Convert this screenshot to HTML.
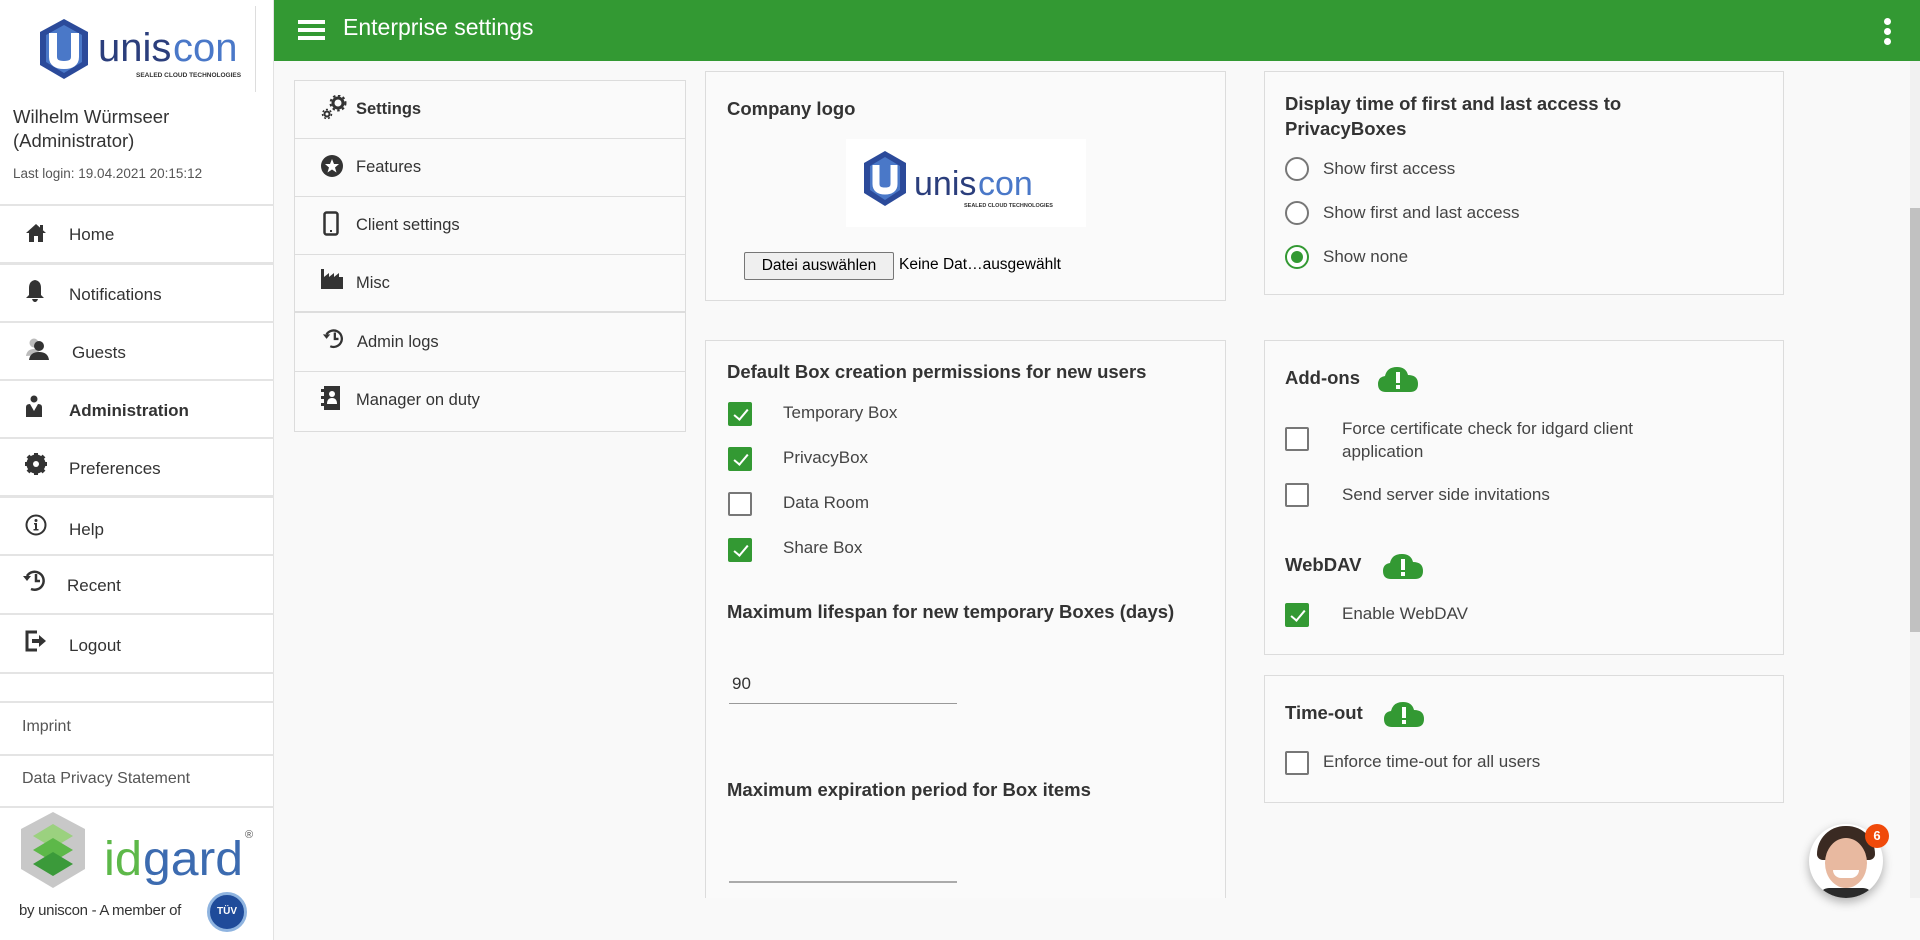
<!DOCTYPE html>
<html><head><meta charset="utf-8"><style>
*{box-sizing:border-box;margin:0;padding:0}
body{width:1920px;height:940px;overflow:hidden;background:#f9f9f9;font-family:"Liberation Sans",sans-serif;color:#333;position:relative}
.a{position:absolute}
#side{left:0;top:0;width:274px;height:940px;background:#fff;border-right:1px solid #e2e2e2}
.hl{position:absolute;left:0;width:274px;height:2px;background:#e4e4e4}
.nav{position:absolute;left:0;width:274px;font-size:17px;color:#333}
.nav svg{position:absolute;left:25px}
.nav span{position:absolute;left:69px}
#hdr{left:274px;top:0;width:1646px;height:61px;background:#339933}
.card{position:absolute;background:#fafafa;border:1px solid #dcdcdc}
.t{position:absolute;font-weight:bold;font-size:18.5px;color:#333}
.lbl{position:absolute;font-size:17px;color:#444}
.cb{position:absolute;width:24px;height:24px;border:2px solid #777;border-radius:2px;background:#fff}
.cb.on{background:#339933;border-color:#339933}
.cb.on:after{content:"";position:absolute;left:7px;top:2px;width:6px;height:12px;border:solid #fff;border-width:0 2px 2px 0;transform:rotate(40deg)}
.rd{position:absolute;width:24px;height:24px;border:2px solid #777;border-radius:50%;background:#fff}
.sub{position:absolute;left:0;width:390px;height:58px;border-bottom:1px solid #ddd;font-size:16.5px;color:#333}
.sub svg{position:absolute;left:26px;top:18px}
.sub span{position:absolute;left:61px;top:19px}
</style></head><body>
<div id="side" class="a">
  <svg class="a" style="left:36px;top:17px" width="205" height="64" viewBox="0 0 205 64">
    <polygon points="28,2 52,15 52,48 28,62 4,48 4,15" fill="#2b4a9a"/>
    <polygon points="28,8 46,18 46,45 28,56 10,45 10,18" fill="#4a78c8"/>
    <path d="M17 16 V40 Q17 48 28 48 Q39 48 39 40 V16" fill="none" stroke="#fff" stroke-width="8"/>
    <text x="62" y="44" font-family="Liberation Sans" font-size="40" fill="#2b3e7c">unis</text>
    <text x="137" y="44" font-family="Liberation Sans" font-size="40" fill="#4a78c8">con</text>
    <text x="100" y="60" font-family="Liberation Sans" font-size="6.5" font-weight="bold" fill="#333">SEALED CLOUD TECHNOLOGIES</text>
  </svg>
  <div class="a" style="left:255px;top:6px;width:1px;height:86px;background:#ddd"></div>
  <div class="a" style="left:13px;top:105px;font-size:18.5px;line-height:24px;color:#333">Wilhelm Würmseer<br>(Administrator)</div>
  <div class="a" style="left:13px;top:166px;font-size:13.5px;color:#555">Last login: 19.04.2021 20:15:12</div>
  <div class="hl" style="top:204px"></div><div class="hl" style="top:262px;height:3px"></div><div class="hl" style="top:321px"></div><div class="hl" style="top:379px"></div><div class="hl" style="top:437px"></div><div class="hl" style="top:495px;height:3px"></div><div class="hl" style="top:554px"></div><div class="hl" style="top:613px"></div><div class="hl" style="top:672px"></div><div class="hl" style="top:701px"></div><div class="hl" style="top:754px"></div><div class="hl" style="top:806px"></div>
  <div class="nav" style="top:206px;height:56px"><svg style="top:17px" width="22" height="20" viewBox="0 0 22 20"><path d="M11 1 L1 10 H4 V19 H9 V13 H13 V19 H18 V10 H21 Z" fill="#333"/><rect x="15" y="2" width="3" height="5" fill="#333"/></svg><span style="top:19px">Home</span></div>
  <div class="nav" style="top:265px;height:56px"><svg style="top:14px" width="20" height="24" viewBox="0 0 20 24"><path d="M10 1 Q4 2 4 9 V16 L1 19 H19 L16 16 V9 Q16 2 10 1Z M7 20 H13 Q12 23 10 23 Q8 23 7 20Z" fill="#333"/></svg><span style="top:20px">Notifications</span></div>
  <div class="nav" style="top:323px;height:56px"><svg style="top:14px" width="26" height="24" viewBox="0 0 26 24"><circle cx="9" cy="6" r="4.5" fill="#bbb"/><path d="M1 19 Q2 12 9 12 Q14 12 15 18Z" fill="#bbb"/><circle cx="14" cy="9" r="5" fill="#333"/><path d="M4 23 Q5 15 14 15 Q23 15 24 23Z" fill="#333"/></svg><span style="top:20px;left:72px">Guests</span></div>
  <div class="nav" style="top:381px;height:56px;font-weight:bold"><svg style="top:14px" width="18" height="24" viewBox="0 0 18 24"><circle cx="9" cy="4" r="3.5" fill="#333"/><path d="M1 22 V12 Q1 9 5 9 L9 16 L13 9 Q17 9 17 12 V22Z" fill="#333"/></svg><span style="top:20px">Administration</span></div>
  <div class="nav" style="top:439px;height:56px"><svg style="top:14px" width="22" height="22" viewBox="0 0 22 22"><circle cx="11" cy="11" r="7" fill="none" stroke="#333" stroke-width="5"/><g stroke="#333" stroke-width="4"><line x1="11" y1="0" x2="11" y2="22"/><line x1="0" y1="11" x2="22" y2="11"/><line x1="3" y1="3" x2="19" y2="19"/><line x1="19" y1="3" x2="3" y2="19"/></g><circle cx="11" cy="11" r="3" fill="#fff"/></svg><span style="top:20px">Preferences</span></div>
  <div class="nav" style="top:498px;height:56px"><svg style="top:16px" width="22" height="22" viewBox="0 0 22 22"><circle cx="11" cy="11" r="9.5" fill="none" stroke="#333" stroke-width="2"/><circle cx="11" cy="6.5" r="1.5" fill="#333"/><path d="M9 9 H12 V15 H13.5 V16.5 H8.5 V15 H10 V10.5 H9Z" fill="#333"/></svg><span style="top:22px">Help</span></div>
  <div class="nav" style="top:556px;height:57px"><svg style="top:12px;left:22px" width="24" height="24" viewBox="0 0 24 24"><path d="M5 8 A9 9 0 1 1 9 21" fill="none" stroke="#333" stroke-width="2.5"/><path d="M1 8 H9 L5 13Z" fill="#333"/><path d="M14 6 V13 H18" fill="none" stroke="#333" stroke-width="2.5"/></svg><span style="top:20px;left:67px">Recent</span></div>
  <div class="nav" style="top:615px;height:57px"><svg style="top:14px" width="22" height="24" viewBox="0 0 22 24"><path d="M12 3 H2 V21 H12" fill="none" stroke="#333" stroke-width="3"/><path d="M7 10 H14 V6 L21 12 L14 18 V14 H7Z" fill="#333"/></svg><span style="top:21px">Logout</span></div>
  <div class="a" style="left:22px;top:718px;font-size:16px;color:#555">Imprint</div>
  <div class="a" style="left:22px;top:770px;font-size:16px;color:#555">Data Privacy Statement</div>
  <svg class="a" style="left:18px;top:812px" width="245" height="80" viewBox="0 0 245 80">
    <polygon points="35,0 67,17 67,57 35,76 3,57 3,17" fill="#c8c8c8"/>
    <polygon points="35,12 55,24 35,36 15,24" fill="#9bd17f"/>
    <polygon points="35,26 55,38 35,50 15,38" fill="#5db849"/>
    <polygon points="35,40 55,52 35,64 15,52" fill="#3b9a3a"/>
    <text x="86" y="63" font-family="Liberation Sans" font-size="48" fill="#5db849" textLength="38" lengthAdjust="spacingAndGlyphs">id</text>
    <text x="125" y="63" font-family="Liberation Sans" font-size="48" fill="#3c6bb0" textLength="100" lengthAdjust="spacingAndGlyphs">gard</text>
    <text x="227" y="26" font-family="Liberation Sans" font-size="11" fill="#555">®</text>
  </svg>
  <div class="a" style="left:19px;top:902px;font-size:15px;color:#333;letter-spacing:-0.3px">by uniscon  -  A member of</div>
  <div class="a" style="left:207px;top:892px;width:40px;height:40px;border-radius:50%;background:#1f4b9a;border:3px solid #8fb4e0;color:#fff;font-size:10px;text-align:center;line-height:34px;font-weight:bold">TÜV</div>
</div>

<div id="hdr" class="a">
  <div class="a" style="left:24px;top:20px;width:27px;height:4px;background:#fff;box-shadow:0 8px 0 #fff,0 16px 0 #fff"></div>
  <div class="a" style="left:69px;top:14px;font-size:23px;color:#fff">Enterprise settings</div>
  <div class="a" style="left:1610px;top:18px;width:7px;height:7px;border-radius:50%;background:#fff;box-shadow:0 10px 0 #fff,0 20px 0 #fff"></div>
</div>

<div class="a" style="left:1910px;top:61px;width:10px;height:837px;background:#f1f1f1"></div>
<div class="a" style="left:1910px;top:208px;width:10px;height:424px;background:#c1c1c1"></div>

<div class="a" style="left:294px;top:80px;width:392px;height:352px;background:#fafafa;border:1px solid #dcdcdc">
  <div class="sub" style="top:0;font-weight:bold"><svg width="26" height="26" viewBox="0 0 26 26" style="top:14px"><circle cx="17" cy="8" r="5" fill="none" stroke="#333" stroke-width="3"/><circle cx="17" cy="8" r="7.5" fill="none" stroke="#333" stroke-width="2" stroke-dasharray="2.5 2.5"/><circle cx="6" cy="19" r="2.5" fill="none" stroke="#333" stroke-width="2"/><circle cx="6" cy="19" r="4.5" fill="none" stroke="#333" stroke-width="1.5" stroke-dasharray="2 2"/></svg><span>Settings</span></div>
  <div class="sub" style="top:58px"><svg width="22" height="22" viewBox="0 0 22 22" style="top:16px"><circle cx="11" cy="11" r="11" fill="#333"/><polygon points="11,4 13,9 18,9 14,12.5 15.5,17.5 11,14.5 6.5,17.5 8,12.5 4,9 9,9" fill="#fff"/></svg><span>Features</span></div>
  <div class="sub" style="top:116px"><svg width="16" height="26" viewBox="0 0 16 26" style="top:14px;left:28px"><rect x="1.5" y="1.5" width="13" height="22" rx="2" fill="none" stroke="#333" stroke-width="2.5"/><rect x="7" y="19" width="2" height="2" fill="#333"/></svg><span>Client settings</span></div>
  <div class="sub" style="top:174px;border-bottom:2px solid #ddd"><svg width="22" height="20" viewBox="0 0 22 20" style="top:14px"><path d="M0 20 V0 H3 V8 L8 4 V8 L13 4 V8 L18 4 V8 H22 V20Z" fill="#333"/></svg><span>Misc</span></div>
  <div class="sub" style="top:233px"><svg width="24" height="22" viewBox="0 0 24 24" style="top:13px"><path d="M5 8 A9 9 0 1 1 9 21" fill="none" stroke="#333" stroke-width="2.5"/><path d="M1 8 H9 L5 13Z" fill="#333"/><path d="M14 6 V13 H18" fill="none" stroke="#333" stroke-width="2.5"/></svg><span style="left:62px">Admin logs</span></div>
  <div class="sub" style="top:291px;border-bottom:none"><svg width="20" height="24" viewBox="0 0 20 24" style="top:14px"><rect x="3" y="0" width="16" height="24" fill="#333"/><rect x="0" y="3" width="3" height="3" fill="#333"/><rect x="0" y="10" width="3" height="3" fill="#333"/><rect x="0" y="17" width="3" height="3" fill="#333"/><circle cx="11" cy="8" r="3" fill="#fff"/><path d="M6 18 Q6 12 11 12 Q16 12 16 18Z" fill="#fff"/></svg><span>Manager on duty</span></div>
</div>

<!-- Company logo -->
<div class="card" style="left:705px;top:71px;width:521px;height:230px">
  <div class="t" style="left:21px;top:26px">Company logo</div>
  <div class="a" style="left:140px;top:67px;width:240px;height:88px;background:#fff">
    <svg width="240" height="88" viewBox="0 0 240 88">
      <polygon points="39,12 60,24 60,54 39,67 18,54 18,24" fill="#2b4a9a"/>
      <polygon points="39,18 54,27 54,51 39,61 24,51 24,27" fill="#4a78c8"/>
      <path d="M30 26 V45 Q30 52 39 52 Q48 52 48 45 V26" fill="none" stroke="#fff" stroke-width="7"/>
      <text x="68" y="56" font-family="Liberation Sans" font-size="34" fill="#2b3e7c">unis</text>
      <text x="132" y="56" font-family="Liberation Sans" font-size="34" fill="#4a78c8">con</text>
      <text x="118" y="68" font-family="Liberation Sans" font-size="5.5" font-weight="bold" fill="#333">SEALED CLOUD TECHNOLOGIES</text>
    </svg>
  </div>
  <div class="a" style="left:38px;top:180px;width:150px;height:28px;background:#efefef;border:1px solid #767676;border-radius:2px;font-size:15.5px;line-height:26px;text-align:center;color:#000">Datei auswählen</div>
  <div class="a" style="left:193px;top:184px;font-size:15.5px;color:#000">Keine Dat…ausgewählt</div>
</div>

<!-- Display time -->
<div class="card" style="left:1264px;top:71px;width:520px;height:224px">
  <div class="t" style="left:20px;top:19px;line-height:25px">Display time of first and last access to<br>PrivacyBoxes</div>
  <div class="rd" style="left:20px;top:85px"></div><div class="lbl" style="left:58px;top:87px">Show first access</div>
  <div class="rd" style="left:20px;top:129px"></div><div class="lbl" style="left:58px;top:131px">Show first and last access</div>
  <div class="rd" style="left:20px;top:173px;border-color:#339933"><div class="a" style="left:4px;top:4px;width:12px;height:12px;border-radius:50%;background:#339933"></div></div><div class="lbl" style="left:58px;top:175px">Show none</div>
</div>

<!-- Default box -->
<div class="card" style="left:705px;top:340px;width:521px;height:558px;border-bottom:none">
  <div class="t" style="left:21px;top:20px">Default Box creation permissions for new users</div>
  <div class="cb on" style="left:22px;top:61px"></div><div class="lbl" style="left:77px;top:62px">Temporary Box</div>
  <div class="cb on" style="left:22px;top:106px"></div><div class="lbl" style="left:77px;top:107px">PrivacyBox</div>
  <div class="cb" style="left:22px;top:151px"></div><div class="lbl" style="left:77px;top:152px">Data Room</div>
  <div class="cb on" style="left:22px;top:197px"></div><div class="lbl" style="left:77px;top:197px">Share Box</div>
  <div class="t" style="left:21px;top:260px">Maximum lifespan for new temporary Boxes (days)</div>
  <div class="a" style="left:26px;top:333px;font-size:17px;color:#333">90</div>
  <div class="a" style="left:23px;top:362px;width:228px;height:1px;background:#999"></div>
  <div class="t" style="left:21px;top:438px">Maximum expiration period for Box items</div>
  <div class="a" style="left:23px;top:540px;width:228px;height:2px;background:#aaa"></div>
</div>

<!-- Add-ons -->
<div class="card" style="left:1264px;top:340px;width:520px;height:315px">
  <div class="t" style="left:20px;top:26px">Add-ons</div>
  <svg class="a" style="left:112px;top:24px" width="42" height="28" viewBox="0 0 42 28"><path d="M9 27 Q1 27 1 19 Q1 12 8 11 Q10 2 20 2 Q29 2 31 10 Q41 10 41 19 Q41 27 33 27Z" fill="#339933"/><rect x="19" y="7" width="4" height="11" fill="#fff"/><rect x="19" y="20" width="4" height="4" fill="#fff"/></svg>
  <div class="cb" style="left:20px;top:86px"></div><div class="lbl" style="left:77px;top:76px;line-height:23px">Force certificate check for idgard client<br>application</div>
  <div class="cb" style="left:20px;top:142px"></div><div class="lbl" style="left:77px;top:144px">Send server side invitations</div>
  <div class="t" style="left:20px;top:213px">WebDAV</div>
  <svg class="a" style="left:117px;top:211px" width="42" height="28" viewBox="0 0 42 28"><path d="M9 27 Q1 27 1 19 Q1 12 8 11 Q10 2 20 2 Q29 2 31 10 Q41 10 41 19 Q41 27 33 27Z" fill="#339933"/><rect x="19" y="7" width="4" height="11" fill="#fff"/><rect x="19" y="20" width="4" height="4" fill="#fff"/></svg>
  <div class="cb on" style="left:20px;top:262px"></div><div class="lbl" style="left:77px;top:263px">Enable WebDAV</div>
</div>

<!-- Time-out -->
<div class="card" style="left:1264px;top:675px;width:520px;height:128px">
  <div class="t" style="left:20px;top:26px">Time-out</div>
  <svg class="a" style="left:118px;top:24px" width="42" height="28" viewBox="0 0 42 28"><path d="M9 27 Q1 27 1 19 Q1 12 8 11 Q10 2 20 2 Q29 2 31 10 Q41 10 41 19 Q41 27 33 27Z" fill="#339933"/><rect x="19" y="7" width="4" height="11" fill="#fff"/><rect x="19" y="20" width="4" height="4" fill="#fff"/></svg>
  <div class="cb" style="left:20px;top:75px"></div><div class="lbl" style="left:58px;top:76px">Enforce time-out for all users</div>
</div>

<!-- chat avatar -->
<div class="a" style="left:1809px;top:824px;width:74px;height:74px;border-radius:50%;background:#fff;box-shadow:0 4px 10px rgba(0,0,0,0.3);overflow:hidden">
  <div class="a" style="left:8px;top:2px;width:58px;height:34px;border-radius:29px 29px 6px 6px;background:#3a2a22"></div>
  <div class="a" style="left:16px;top:14px;width:42px;height:50px;border-radius:50%;background:#e8b9a0"></div>
  <div class="a" style="left:24px;top:46px;width:26px;height:8px;border-radius:0 0 12px 12px;background:#fff"></div>
  <div class="a" style="left:10px;top:64px;width:54px;height:20px;background:#2a2a2a;border-radius:10px"></div>
</div>
<div class="a" style="left:1865px;top:824px;width:24px;height:24px;border-radius:50%;background:#f04a0a;color:#fff;font-size:13px;font-weight:bold;text-align:center;line-height:24px">6</div>
</body></html>
